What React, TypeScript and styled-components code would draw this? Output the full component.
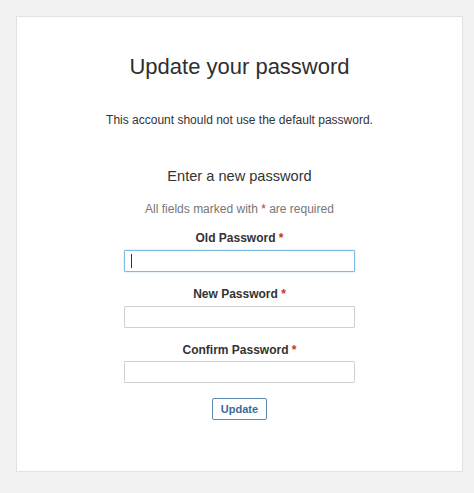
import React from "react";
import styled, { createGlobalStyle } from "styled-components";

const Global = createGlobalStyle`
  html, body { margin: 0; padding: 0; background: #f2f2f2; }
  body { font-family: "Liberation Sans", Arial, sans-serif; color: #333; }
`;

const Page = styled.div`
  padding: 16px 11px 21px 16px;
`;

const Card = styled.div`
  box-sizing: border-box;
  width: 447px;
  height: 456px;
  background: #fff;
  border: 1px solid #e2e2e2;
  padding-top: 37px;
  display: flex;
  flex-direction: column;
  align-items: center;
`;

const Title = styled.h1`
  margin: 0;
  font-size: 22px;
  line-height: 25px;
  font-weight: normal;
  color: #2f2f2f;
`;

const Notice = styled.p`
  margin: 33.8px 0 0;
  font-size: 12px;
  line-height: 14px;
  color: #333;
`;

const Subtitle = styled.h2`
  margin: 41.2px 0 0;
  font-size: 14.6px;
  line-height: 17px;
  font-weight: normal;
  color: #333;
`;

const Hint = styled.p`
  margin: 17.3px 0 0;
  font-size: 12px;
  line-height: 14px;
  color: #777;
`;

const Star = styled.span`
  color: #c9302c;
`;

const Form = styled.form`
  margin-top: 15px;
  display: flex;
  flex-direction: column;
  align-items: center;
`;

const Field = styled.div`
  display: flex;
  flex-direction: column;
  align-items: center;
  margin-bottom: 15px;
`;

const Label = styled.label`
  font-size: 12px;
  line-height: 14px;
  font-weight: bold;
  color: #333;
  margin-bottom: 4.7px;
`;

const Input = styled.input<{ $focused?: boolean }>`
  box-sizing: border-box;
  width: 231px;
  height: 22px;
  margin: 0;
  padding: 2px 6px;
  font-family: "Liberation Sans", Arial, sans-serif;
  font-size: 13px;
  background: #fff;
  border: 1px solid ${(p) => (p.$focused ? "#7dbbe2" : "#cfcfcf")};
  border-radius: 1px;
  box-shadow: ${(p) => (p.$focused ? "0 0 2px rgba(102,175,233,0.5)" : "none")};
  outline: none;
  display: flex;
  align-items: center;
`;

const FakeInput = styled.div`
  box-sizing: border-box;
  width: 231px;
  height: 22px;
  padding: 0 6px;
  background: #fff;
  border: 1px solid #7dbbe2;
  border-radius: 1px;
  box-shadow: 0 0 2px rgba(102, 175, 233, 0.5);
  display: flex;
  align-items: center;
`;

const Caret = styled.span`
  display: block;
  width: 1px;
  height: 14px;
  background: #333;
`;

const Button = styled.button`
  box-sizing: border-box;
  width: 55px;
  height: 21.6px;
  margin: 0;
  padding: 0;
  background: #fff;
  border: 1px solid #5b8bb2;
  border-radius: 2px;
  color: #3a6b98;
  font-family: "Liberation Sans", Arial, sans-serif;
  font-size: 11px;
  font-weight: bold;
  cursor: pointer;
`;

export default function App() {
  return (
    <>
      <Global />
      <Page>
        <Card>
          <Title>Update your password</Title>
          <Notice>This account should not use the default password.</Notice>
          <Subtitle>Enter a new password</Subtitle>
          <Hint>
            All fields marked with <Star>*</Star> are required
          </Hint>
          <Form onSubmit={(e) => e.preventDefault()}>
            <Field>
              <Label>
                Old Password <Star>*</Star>
              </Label>
              <FakeInput>
                <Caret />
              </FakeInput>
            </Field>
            <Field>
              <Label htmlFor="np">
                New Password <Star>*</Star>
              </Label>
              <Input id="np" type="password" />
            </Field>
            <Field>
              <Label htmlFor="cp">
                Confirm Password <Star>*</Star>
              </Label>
              <Input id="cp" type="password" />
            </Field>
            <Button type="submit">Update</Button>
          </Form>
        </Card>
      </Page>
    </>
  );
}
